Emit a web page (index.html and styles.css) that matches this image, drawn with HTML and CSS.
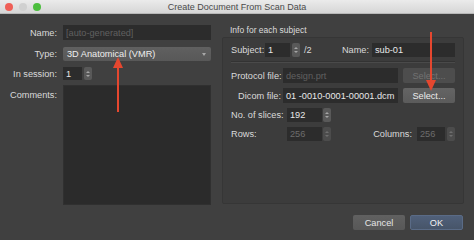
FILE: index.html
```html
<!DOCTYPE html>
<html>
<head>
<meta charset="utf-8">
<link rel="stylesheet" href="styles.css">
</head>
<body>
<div class="window">
  <div class="titlebar">
    <div class="lights">
      <span class="light red"></span>
      <span class="light gray"></span>
      <span class="light green"></span>
    </div>
    <div class="title">Create Document From Scan Data</div>
  </div>

  <div class="content">
    <div class="left">
      <div class="lrow r-name">
        <span class="lbl">Name:</span>
        <div class="field wide placeholder">[auto-generated]</div>
      </div>
      <div class="lrow r-type">
        <span class="lbl">Type:</span>
        <div class="popup"><span>3D Anatomical (VMR)</span><span class="caret"></span></div>
      </div>
      <div class="lrow r-session">
        <span class="lbl">In session:</span>
        <div class="field session">1</div>
        <div class="stepper"><span class="up"></span><span class="down"></span></div>
      </div>
      <div class="lrow r-comments">
        <span class="lbl top">Comments:</span>
        <div class="textarea"></div>
      </div>
    </div>

    <div class="group">
      <div class="group-title">Info for each subject</div>
      <div class="box">
        <div class="grow r-subject">
          <span class="g-lbl subj">Subject:</span>
          <div class="field subj-in">1</div>
          <div class="stepper"><span class="up"></span><span class="down"></span></div>
          <span class="of">/2</span>
          <span class="g-lbl name-lbl">Name:</span>
          <div class="field name-in">sub-01</div>
        </div>
        <div class="sep"></div>
        <div class="grow r-file first">
          <span class="g-lbl file-lbl">Protocol file:</span>
          <div class="field file-in placeholder">design.prt</div>
          <div class="btn select disabled">Select...</div>
        </div>
        <div class="grow r-file">
          <span class="g-lbl file-lbl">Dicom file:</span>
          <div class="field file-in">01 -0010-0001-00001.dcm</div>
          <div class="btn select">Select...</div>
        </div>
        <div class="grow r-num">
          <span class="g-lbl num-lbl">No. of slices:</span>
          <div class="field num-in">192</div>
          <div class="stepper"><span class="up"></span><span class="down"></span></div>
        </div>
        <div class="grow r-num">
          <span class="g-lbl num-lbl">Rows:</span>
          <div class="field num-in disabled">256</div>
          <div class="stepper disabled"><span class="up"></span><span class="down"></span></div>
          <span class="g-lbl col-lbl">Columns:</span>
          <div class="field col-in disabled">256</div>
          <div class="stepper disabled"><span class="up"></span><span class="down"></span></div>
        </div>
      </div>
    </div>
  </div>

  <div class="footer">
    <div class="btn cancel">Cancel</div>
    <div class="btn ok">OK</div>
  </div>

  <svg class="overlay" width="474" height="240" viewBox="0 0 474 240">
    <line x1="118" y1="66" x2="118" y2="112" stroke="#e5472f" stroke-width="2"/>
    <polygon points="118,57 113,68 123,68" fill="#e5472f"/>
    <line x1="431" y1="32" x2="431" y2="82" stroke="#e5472f" stroke-width="2"/>
    <polygon points="431,91 426,80 436,80" fill="#e5472f"/>
  </svg>
</div>
</body>
</html>
```

FILE: styles.css
```css
* { box-sizing: border-box; }
html, body { margin: 0; padding: 0; }
body {
  width: 474px;
  height: 240px;
  overflow: hidden;
  background: #404040;
  font-family: "Liberation Sans", Arial, sans-serif;
  font-size: 9.2px;
  color: #dadada;
}
.window {
  position: relative;
  width: 474px;
  height: 240px;
  background: #404040;
}
.titlebar {
  position: relative;
  height: 14px;
  background: linear-gradient(#ebebeb, #d6d6d6);
  border-bottom: 1px solid #b8b8b8;
  display: flex;
  align-items: center;
  justify-content: center;
}
.lights {
  position: absolute;
  left: 5px;
  top: 3px;
  display: flex;
  gap: 6px;
}
.light {
  width: 8px;
  height: 8px;
  border-radius: 50%;
  display: block;
}
.light.red { background: #ef5f57; }
.light.gray { background: #d0d0d0; }
.light.green { background: #4cbe3e; }
.title {
  color: #4a4a4a;
  font-size: 9px;
  line-height: 14px;
}

.content {
  display: flex;
  padding-top: 11px;
  height: 191px;
}
.left {
  width: 211px;
  display: flex;
  flex-direction: column;
}
.lrow {
  display: flex;
  align-items: center;
}
.lbl {
  width: 57px;
  text-align: right;
  margin-right: 6px;
  line-height: 10px;
}
.lbl.top { align-self: flex-start; margin-top: 5px; }
.r-name { height: 15px; }
.r-type { height: 14px; margin-top: 7px; }
.r-session { height: 13px; margin-top: 6px; }
.r-comments { height: 120px; margin-top: 5px; align-items: stretch; }

.field {
  background: #2c2c2c;
  color: #e8e8e8;
  height: 100%;
  display: flex;
  align-items: center;
  padding-left: 3px;
  white-space: nowrap;
  overflow: hidden;
}
.field.placeholder { color: #606060; }
.field.disabled { color: #6c6c6c; }
.field.wide { width: 148px; }
.field.session { width: 19px; }
.textarea {
  width: 148px;
  background: #2b2b2b;
  border: 1px solid #303030;
}
.popup {
  width: 148px;
  height: 100%;
  background: linear-gradient(#606060, #585858);
  border-radius: 2px;
  color: #eeeeee;
  display: flex;
  align-items: center;
  justify-content: space-between;
  padding: 0 5px 0 4px;
}
.caret {
  width: 0;
  height: 0;
  border-left: 2.5px solid transparent;
  border-right: 2.5px solid transparent;
  border-top: 3px solid #a8a8a8;
}
.stepper {
  width: 8px;
  height: 100%;
  margin-left: 2px;
  background: #595959;
  border-radius: 2px;
  display: flex;
  flex-direction: column;
  align-items: center;
  justify-content: center;
  gap: 2px;
}
.stepper .up, .stepper .down {
  width: 0;
  height: 0;
  border-left: 2px solid transparent;
  border-right: 2px solid transparent;
}
.stepper .up { border-bottom: 2px solid #a5a5a5; }
.stepper .down { border-top: 2px solid #a5a5a5; }
.stepper.disabled { background: #4c4c4c; }
.stepper.disabled .up { border-bottom-color: #6e6e6e; }
.stepper.disabled .down { border-top-color: #6e6e6e; }

.group {
  margin-left: 11px;
  width: 242px;
  display: flex;
  flex-direction: column;
}
.group-title {
  height: 12px;
  line-height: 10px;
  padding-left: 8px;
  font-size: 8.5px;
  color: #dcdcdc;
}
.box {
  height: 167px;
  background: #3c3c3c;
  border: 1px solid #363636;
  border-radius: 2px;
  padding: 5px 8px 0 8px;
  display: flex;
  flex-direction: column;
}
.grow {
  display: flex;
  align-items: center;
}
.r-subject { height: 14px; }
.sep {
  margin-top: 4px;
  border-top: 1px solid #333;
  border-bottom: 1px solid #4a4a4a;
  height: 0;
  box-sizing: content-box;
}
.r-file { height: 15px; margin-top: 5px; }
.r-file.first { margin-top: 5px; }
.r-num { height: 14px; margin-top: 5px; }
.g-lbl { line-height: 10px; white-space: nowrap; }
.subj { width: 32px; margin-right: 2px; }
.field.subj-in { width: 25px; }
.of { margin-left: 4px; width: 20px; }
.name-lbl { margin-left: auto; margin-right: 3px; }
.field.name-in { width: 83px; }
.file-lbl { width: 50px; text-align: right; margin-right: 2px; }
.field.file-in { width: 115px; }
.btn {
  height: 100%;
  border-radius: 2px;
  display: flex;
  align-items: center;
  justify-content: center;
  color: #ececec;
}
.btn.select {
  width: 52px;
  margin-left: 5px;
  background: linear-gradient(#646464, #5b5b5b);
}
.btn.select.disabled {
  background: #4d4d4d;
  color: #727272;
}
.num-lbl { width: 56px; }
.field.num-in { width: 35px; }
.r-num .stepper { margin-left: 1px; }
.col-lbl { margin-left: auto; margin-right: 5px; }
.field.col-in { width: 28px; }
.r-num .col-in + .stepper { margin-left: 2px; }

.footer {
  display: flex;
  justify-content: flex-end;
  padding-right: 11px;
  margin-top: 10px;
  height: 15px;
  gap: 5px;
}
.btn.cancel {
  width: 52px;
  background: linear-gradient(#606060, #585858);
  color: #e6e6e6;
}
.btn.ok {
  width: 53px;
  background: linear-gradient(#50607a, #475569);
  border: 1px solid #5a6b86;
  color: #f2f2f2;
}
.overlay {
  position: absolute;
  left: 0;
  top: 0;
  pointer-events: none;
}
```
